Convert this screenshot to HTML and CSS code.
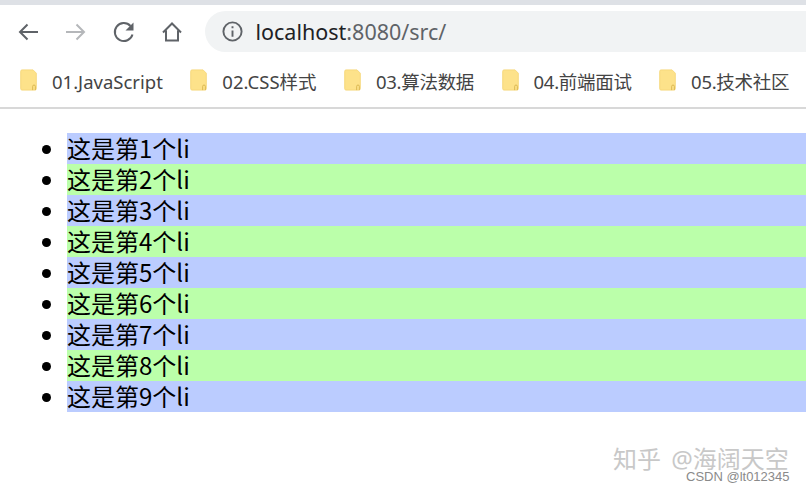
FILE: index.html
```html
<!DOCTYPE html>
<html lang="zh-CN">
<head>
    <meta charset="UTF-8">
    <meta name="viewport" content="width=device-width, initial-scale=1.0">
    <title>localhost:8080/src/</title>
    <link rel="stylesheet" href="styles.css">
</head>
<body>
    <div class="browser">
        <div class="toolbar">
            <svg class="nav-icon back" viewBox="0 0 24 24"><path d="M22 12H4M11.500 4.500L4 12l7.500 7.500"/></svg>
            <svg class="nav-icon forward" viewBox="0 0 24 24"><path d="M2 12h18M12.500 4.500L20 12l-7.500 7.500"/></svg>
            <svg class="nav-icon reload" viewBox="0 0 24 24"><path d="M20.500 14.500A9 9 0 1 1 18.500 6"/><path class="solid" d="M21.500 2.500v8h-8z"/></svg>
            <svg class="nav-icon home" viewBox="0 0 24 24"><path d="M3 12.500L12 3.500l9 9M6 10.500V20.500h12v-10"/></svg>
            <div class="address">
                <svg class="info" viewBox="0 0 24 24"><circle cx="12" cy="12" r="9.500"/><path d="M12 11v6.500M12 6.500v2"/></svg>
                <span class="host">localhost</span><span class="path">:8080/src/</span>
            </div>
        </div>
        <div class="bookmarks">
            <div class="bookmark"><svg class="folder" viewBox="0 0 19 24"><path d="M2.500 1h12l3.500 3.500V21.500a1.500 1.500 0 0 1-1.500 1.500h-14A1.500 1.500 0 0 1 1 21.500v-19A1.500 1.500 0 0 1 2.500 1z"/><path class="clip" d="M14 23v-4a1.500 1.500 0 0 1 3 0v4"/></svg><span>01.JavaScript</span></div>
            <div class="bookmark"><svg class="folder" viewBox="0 0 19 24"><path d="M2.500 1h12l3.500 3.500V21.500a1.500 1.500 0 0 1-1.500 1.500h-14A1.500 1.500 0 0 1 1 21.500v-19A1.500 1.500 0 0 1 2.500 1z"/><path class="clip" d="M14 23v-4a1.500 1.500 0 0 1 3 0v4"/></svg><span>02.CSS样式</span></div>
            <div class="bookmark tight"><svg class="folder" viewBox="0 0 19 24"><path d="M2.500 1h12l3.500 3.500V21.500a1.500 1.500 0 0 1-1.500 1.500h-14A1.500 1.500 0 0 1 1 21.500v-19A1.500 1.500 0 0 1 2.500 1z"/><path class="clip" d="M14 23v-4a1.500 1.500 0 0 1 3 0v4"/></svg><span>03.算法数据</span></div>
            <div class="bookmark tight"><svg class="folder" viewBox="0 0 19 24"><path d="M2.500 1h12l3.500 3.500V21.500a1.500 1.500 0 0 1-1.500 1.500h-14A1.500 1.500 0 0 1 1 21.500v-19A1.500 1.500 0 0 1 2.500 1z"/><path class="clip" d="M14 23v-4a1.500 1.500 0 0 1 3 0v4"/></svg><span>04.前端面试</span></div>
            <div class="bookmark tight"><svg class="folder" viewBox="0 0 19 24"><path d="M2.500 1h12l3.500 3.500V21.500a1.500 1.500 0 0 1-1.500 1.500h-14A1.500 1.500 0 0 1 1 21.500v-19A1.500 1.500 0 0 1 2.500 1z"/><path class="clip" d="M14 23v-4a1.500 1.500 0 0 1 3 0v4"/></svg><span>05.技术社区</span></div>
        </div>
    </div>

    <ul class="list">
        <li>这是第1个li</li>
        <li>这是第2个li</li>
        <li>这是第3个li</li>
        <li>这是第4个li</li>
        <li>这是第5个li</li>
        <li>这是第6个li</li>
        <li>这是第7个li</li>
        <li>这是第8个li</li>
        <li>这是第9个li</li>
    </ul>

    <div class="watermark">知乎 @海阔天空</div>
    <div class="credit">CSDN @lt012345</div>
</body>
</html>
```

FILE: styles.css
```css
* {
    margin: 0;
    padding: 0;
    box-sizing: border-box;
}

body {
    position: relative;
    height: 491px;
    overflow: hidden;
    background: #fff;
    color: #000;
    font-family: "Noto Sans", "Noto Sans CJK SC", sans-serif;
}

.browser {
    border-top: 5px solid #dee1e6;
    border-bottom: 2px solid #d8d8d8;
    height: 109px;
}

.toolbar {
    display: flex;
    align-items: center;
    height: 41px;
    margin: 6px 0;
    padding-left: 16px;
}

.nav-icon {
    width: 24px;
    height: 24px;
    flex: none;
    margin-top: 1px;
    fill: none;
    stroke: #5f6368;
    stroke-width: 2;
}

.nav-icon .solid {
    fill: #5f6368;
    stroke: none;
}

.forward {
    margin-left: 23.500px;
    stroke: #b5b7ba;
}

.reload {
    margin-left: 24.500px;
}

.home {
    margin-left: 23.500px;
}

.address {
    display: flex;
    align-items: center;
    flex: 1;
    height: 41px;
    margin-left: 21px;
    padding-left: 16px;
    border-radius: 21px 0 0 21px;
    background: #f1f3f4;
    font-size: 21.500px;
}

.info {
    width: 23px;
    height: 23px;
    margin-right: 12px;
    fill: none;
    stroke: #5f6368;
    stroke-width: 2;
}

.host {
    color: #202124;
}

.path {
    color: #5f6368;
}

.bookmarks {
    display: flex;
    align-items: center;
    height: 46px;
    padding-left: 19px;
}

.bookmark {
    display: flex;
    align-items: center;
    gap: 14px;
    margin-right: 26.500px;
    font-size: 18.500px;
    color: #444;
    white-space: nowrap;
}

.tight {
    letter-spacing: -0.3px;
}

.folder {
    width: 19px;
    height: 22px;
    margin-top: -2px;
    flex: none;
    fill: #fde28a;
    stroke: #f5d778;
    stroke-width: 1;
}

.folder .clip {
    fill: none;
    stroke: #d9b64f;
}

.list {
    margin-top: 24px;
    padding-left: 67px;
    font-size: 24px;
    font-family: "Noto Sans CJK SC", "Noto Sans", sans-serif;
}

.list li {
    height: 31px;
    line-height: 29px;
}

.list li:nth-child(odd) {
    background: #bbccff;
}

.list li:nth-child(even) {
    background: #bbffaa;
}

.watermark {
    position: absolute;
    left: 613px;
    top: 440px;
    font-size: 24px;
    word-spacing: 4px;
    color: #c8c8c8;
    white-space: nowrap;
}

.credit {
    position: absolute;
    left: 686px;
    top: 469px;
    font-family: "Liberation Sans", sans-serif;
    font-size: 13px;
    color: #8a8a8a;
    white-space: nowrap;
}
```
